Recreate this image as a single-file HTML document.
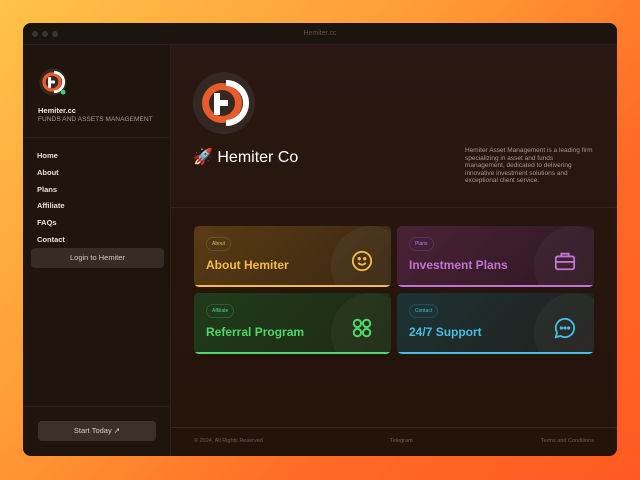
<!DOCTYPE html><html><head><style>
*{margin:0;padding:0;box-sizing:border-box}
body{width:640px;height:480px;overflow:hidden;background:linear-gradient(135deg,#ffc24a 0%,#ff9a35 40%,#ff6a25 70%,#ff5a22 100%);font-family:"Liberation Sans",sans-serif;position:relative}
.win{position:absolute;left:23px;top:23px;width:594px;height:433px;background:#1e120b;border-radius:8px;overflow:hidden}
.tb{height:22px;background:#1c140e;border-bottom:1px solid #2c2119;position:relative}
.dot{position:absolute;top:8px;width:6px;height:6px;border-radius:50%;background:#3d342e}
.tb .t{position:absolute;left:0;right:0;top:7px;text-align:center;font-size:7px;color:#5d5148}
.side{position:absolute;left:0;top:22px;width:148px;bottom:0;background:#1f150d;border-right:1px solid #2c2119}
.main{position:absolute;left:148px;top:22px;right:0;bottom:0;background:linear-gradient(180deg,#2a1912 0%,#231309 100%)}
.nav{position:absolute;left:14px;font-size:7.5px;color:#e8e0da;font-weight:bold}
.card{position:absolute;width:197px;height:61px;border-radius:5px;overflow:hidden}
.card .c{position:absolute;right:-20px;top:0;width:80px;height:80px;border-radius:50%;background:rgba(255,255,255,.04)}
.card .tag{position:absolute;left:12px;top:11px;font-size:5px;padding:3px 5px;border-radius:8px}
.card .h{position:absolute;left:12px;top:32px;font-size:12px;font-weight:bold}
.card .b{position:absolute;left:0;right:0;bottom:0;height:2px}
.card svg{position:absolute;right:18px;top:24px}
</style></head><body>
<div class="win">
<div class="tb"><div class="dot" style="left:9px"></div><div class="dot" style="left:19px"></div><div class="dot" style="left:29px"></div><div class="t">Hemiter.cc</div></div>
<div class="side">
<svg style="position:absolute;left:15px;top:22px" width="30" height="30" viewBox="0 0 62 62"><circle cx="31" cy="31" r="28" fill="#352823"/><circle cx="29" cy="31" r="20" fill="#e85c2c"/><circle cx="29" cy="31" r="13" fill="#352823"/><path d="M33 11a20 20 0 0 1 0 40" fill="none" stroke="#fff" stroke-width="6"/><rect x="21" y="21" width="6" height="22" fill="#fff"/><rect x="21" y="28" width="14" height="6" fill="#fff"/><circle cx="52" cy="52" r="5" fill="#3ad36a"/></svg>
<div style="position:absolute;left:15px;top:61px;font-size:7.5px;color:#efe8e2;font-weight:bold">Hemiter.cc</div>
<div style="position:absolute;left:15px;top:71px;font-size:6.6px;color:#a49a92">FUNDS AND ASSETS MANAGEMENT</div>
<div style="position:absolute;left:0;right:0;top:92px;border-top:1px solid #2c2119"></div>
<div class="nav" style="top:106px">Home</div><div class="nav" style="top:123px">About</div><div class="nav" style="top:140px">Plans</div><div class="nav" style="top:156px">Affiliate</div><div class="nav" style="top:173px">FAQs</div><div class="nav" style="top:190px">Contact</div>
<div style="position:absolute;left:8px;top:203px;width:133px;height:20px;background:#352c25;border-radius:4px;font-size:7.5px;color:#cfc7c0;text-align:center;line-height:20px">Login to Hemiter</div>
<div style="position:absolute;left:0;right:0;top:361px;border-top:1px solid #2c2119"></div>
<div style="position:absolute;left:15px;top:376px;width:118px;height:20px;background:#3a3029;border-radius:4px;font-size:7.5px;color:#d7cfc8;text-align:center;line-height:20px">Start Today ↗</div>
</div>
<div class="main">
<svg style="position:absolute;left:22px;top:27px" width="62" height="62" viewBox="0 0 62 62"><circle cx="31" cy="31" r="31" fill="#352823"/><circle cx="29" cy="31" r="20" fill="#e85c2c"/><circle cx="29" cy="31" r="13" fill="#352823"/><path d="M33 11a20 20 0 0 1 0 40" fill="none" stroke="#fff" stroke-width="6"/><rect x="21" y="21" width="6" height="22" fill="#fff"/><rect x="21" y="28" width="14" height="6" fill="#fff"/></svg>
<div style="position:absolute;left:22px;top:102px;font-size:16px;color:#fff">🚀 Hemiter Co</div>
<div style="position:absolute;left:294px;top:102px;width:128px;font-size:6.5px;line-height:7.5px;color:#a39890">Hemiter Asset Management is a leading firm specializing in asset and funds management, dedicated to delivering innovative investment solutions and exceptional client service.</div>
<div style="position:absolute;left:0;right:0;top:162px;border-top:1px solid #33261d"></div>
<div class="card" style="left:23px;top:181px;background:linear-gradient(135deg,#5a3b14,#3a2712)"><div class="c"></div><div class="tag" style="color:#e6b54a;border:1px solid #6e5020;background:#4f3717">About</div><div class="h" style="color:#f4bd48">About Hemiter</div><svg width="22" height="22" viewBox="0 0 24 24" fill="none" stroke="#f4bd48" stroke-width="2"><circle cx="12" cy="12" r="10"/><path d="M8 14s1.5 2 4 2 4-2 4-2"/><circle cx="9" cy="9.5" r=".8" fill="#f4bd48"/><circle cx="15" cy="9.5" r=".8" fill="#f4bd48"/></svg><div class="b" style="background:#f4bd48"></div></div>
<div class="card" style="left:226px;top:181px;background:linear-gradient(135deg,#4a2236,#2e1820)"><div class="c"></div><div class="tag" style="color:#c87ad8;border:1px solid #5e3050;background:#41203a">Plans</div><div class="h" style="color:#c273d6">Investment Plans</div><svg width="22" height="22" viewBox="0 0 24 24" fill="none" stroke="#c273d6" stroke-width="2"><rect x="2" y="7" width="20" height="14" rx="2"/><path d="M8 7V4h8v3M2 13h20"/></svg><div class="b" style="background:#c273d6"></div></div>
<div class="card" style="left:23px;top:248px;background:linear-gradient(135deg,#1f3c1a,#1f2812)"><div class="c"></div><div class="tag" style="color:#4fd06a;border:1px solid #2f5a2a;background:#1e3a1c">Affiliate</div><div class="h" style="color:#50d66a">Referral Program</div><svg width="22" height="22" viewBox="0 0 24 24" fill="none" stroke="#50d66a" stroke-width="2.2"><circle cx="7" cy="7" r="4"/><circle cx="17" cy="7" r="4"/><circle cx="7" cy="17" r="4"/><circle cx="17" cy="17" r="4"/></svg><div class="b" style="background:#50d66a"></div></div>
<div class="card" style="left:226px;top:248px;background:linear-gradient(135deg,#1c3234,#22201c)"><div class="c"></div><div class="tag" style="color:#48b8d4;border:1px solid #2a4a50;background:#1c3336">Contact</div><div class="h" style="color:#48bde0">24/7 Support</div><svg width="22" height="22" viewBox="0 0 24 24" fill="none" stroke="#48bde0" stroke-width="2"><path d="M12 2a10 10 0 1 1-5 18.7L2 22l1.3-5A10 10 0 0 1 12 2z"/><circle cx="8" cy="12" r=".8" fill="#48bde0"/><circle cx="12" cy="12" r=".8" fill="#48bde0"/><circle cx="16" cy="12" r=".8" fill="#48bde0"/></svg><div class="b" style="background:#48bde0"></div></div>
<div style="position:absolute;left:0;right:0;top:382px;border-top:1px solid #33261d"></div>
<div style="position:absolute;left:23px;top:393px;font-size:5.5px;color:#6d6058">© 2024, All Rights Reserved</div>
<div style="position:absolute;left:219px;top:393px;font-size:5.5px;color:#6d6058">Telegram</div>
<div style="position:absolute;right:23px;top:393px;font-size:5.5px;color:#6d6058">Terms and Conditions</div>
</div>
</div>
</body></html>
